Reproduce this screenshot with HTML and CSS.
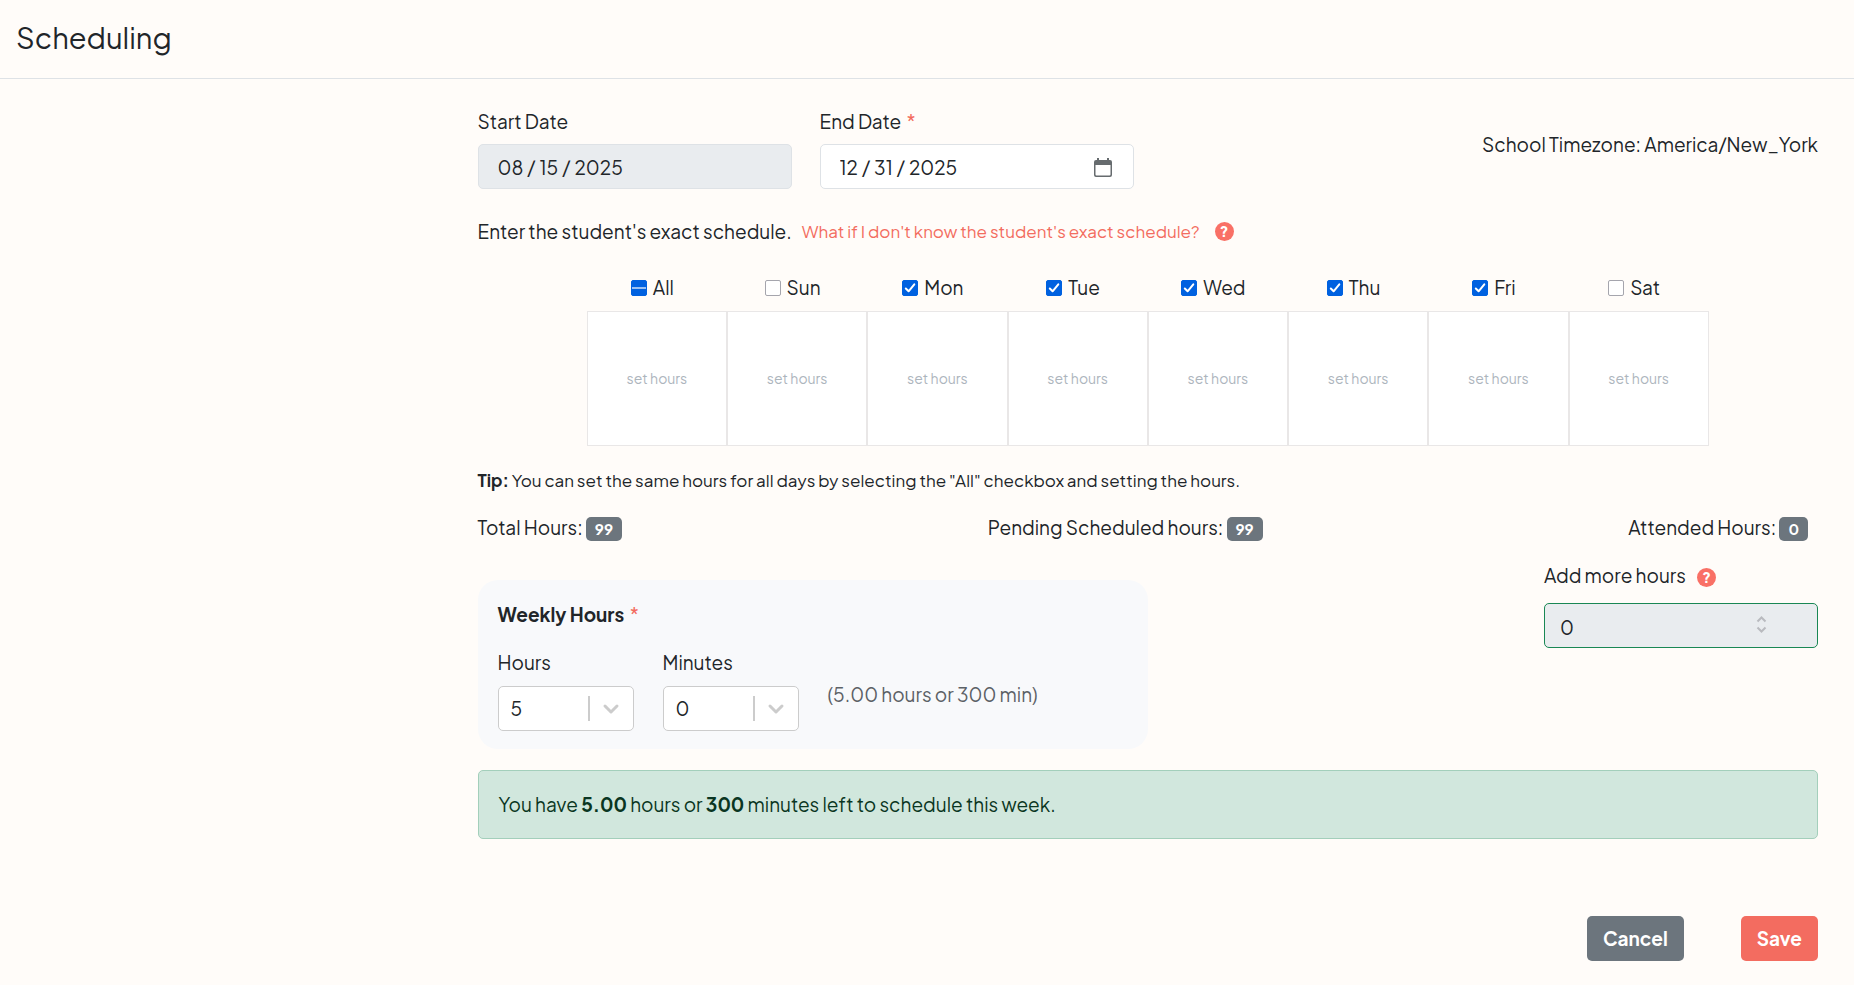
FILE: index.html
```html
<!DOCTYPE html>
<html lang="en">
<head>
  <meta charset="UTF-8">
  <meta name="viewport" content="width=device-width, initial-scale=1">
  <title>Scheduling</title>
  <link rel="stylesheet" href="styles.css">
</head>
<body>
  <header class="page-header">
    <h1>Scheduling</h1>
  </header>

  <form class="schedule-form">
    <div class="date-row">
      <div class="date-field">
        <label for="start-date">Start Date</label>
        <input type="date" id="start-date" class="form-control" value="2025-08-15" disabled>
      </div>
      <div class="date-field">
        <label for="end-date">End Date <span class="required">*</span></label>
        <input type="date" id="end-date" class="form-control" value="2025-12-31" required>
      </div>
      <p class="timezone">School Timezone: America/New_York</p>
    </div>

    <div class="intro">
      <span>Enter the student's exact schedule.</span>
      <a href="#help">What if I don't know the student's exact schedule?</a>
      <button type="button" class="help">?</button>
    </div>

    <table class="week">
      <thead>
        <tr>
          <th><label><input type="checkbox" id="all-days"> All</label></th>
          <th><label><input type="checkbox"> Sun</label></th>
          <th><label><input type="checkbox" checked> Mon</label></th>
          <th><label><input type="checkbox" checked> Tue</label></th>
          <th><label><input type="checkbox" checked> Wed</label></th>
          <th><label><input type="checkbox" checked> Thu</label></th>
          <th><label><input type="checkbox" checked> Fri</label></th>
          <th><label><input type="checkbox"> Sat</label></th>
        </tr>
      </thead>
      <tbody>
        <tr>
          <td><button type="button">set hours</button></td>
          <td><button type="button">set hours</button></td>
          <td><button type="button">set hours</button></td>
          <td><button type="button">set hours</button></td>
          <td><button type="button">set hours</button></td>
          <td><button type="button">set hours</button></td>
          <td><button type="button">set hours</button></td>
          <td><button type="button">set hours</button></td>
        </tr>
      </tbody>
    </table>

    <p class="tip"><strong>Tip:</strong> You can set the same hours for all days by selecting the "All" checkbox and setting the hours.</p>

    <div class="totals">
      <span>Total Hours: <span class="badge">99</span></span>
      <span>Pending Scheduled hours: <span class="badge">99</span></span>
      <span>Attended Hours: <span class="badge">0</span></span>
    </div>

    <div class="hours-row">
      <fieldset class="weekly">
        <legend>Weekly Hours <span class="required">*</span></legend>
        <div class="weekly-fields">
          <div class="select-field">
            <label for="hours">Hours</label>
            <select id="hours">
              <option>5</option>
            </select>
          </div>
          <div class="select-field">
            <label for="minutes">Minutes</label>
            <select id="minutes">
              <option>0</option>
            </select>
          </div>
          <span class="summary">(5.00 hours or 300 min)</span>
        </div>
      </fieldset>

      <div class="more-hours">
        <div class="more-label">
          <label for="more-hours">Add more hours</label>
          <button type="button" class="help">?</button>
        </div>
        <input type="number" id="more-hours" class="form-control is-valid" value="0" disabled>
      </div>
    </div>

    <div class="alert">You have <strong>5.00</strong> hours or <strong>300</strong> minutes left to schedule this week.</div>

    <div class="actions">
      <button type="button" class="btn btn-secondary">Cancel</button>
      <button type="submit" class="btn btn-primary">Save</button>
    </div>
  </form>

  <script src="script.js"></script>
</body>
</html>
```
FILE: styles.css
```css
* {
  box-sizing: border-box;
}
body {
  margin: 0;
  background-color: #fffcf9;
  color: #212529;
  font-family: 'Plus Jakarta Sans', Inter, sans-serif;
  font-size: 19px;
  line-height: 29px;
}
button, input, select {
  font: inherit;
  color: inherit;
}
h1, p {
  margin: 0;
}
.page-header {
  padding: 19px 16px 23px;
  border-bottom: 1px solid #dee2e6;
}
h1 {
  font-size: 29px;
  font-weight: 400;
  line-height: 36px;
}
.schedule-form {
  margin-left: 25%;
  padding: 28px 36px 24px 14px;
}
label {
  display: block;
}
.required {
  margin-left: 2px;
  color: #f36c60;
}

/* dates */
.date-row {
  display: flex;
  gap: 28px;
}
.date-field {
  width: 314px;
}
.date-field label {
  margin-bottom: 8px;
}
.form-control {
  display: block;
  width: 100%;
  height: 45px;
  padding: 2px 20px 0 19px;
  border: 1px solid #dee2e6;
  border-radius: 5px;
  background-color: #fff;
}
.form-control:disabled {
  background-color: #e9ecef;
  color: #212529;
  opacity: 1;
}
::-webkit-datetime-edit-text {
  padding: 0 4px;
}
::-webkit-datetime-edit-month-field,
::-webkit-datetime-edit-day-field,
::-webkit-datetime-edit-year-field {
  padding: 0;
}
::-webkit-calendar-picker-indicator {
  width: 20px;
  height: 24px;
  padding: 0;
  background: url("data:image/svg+xml,%3Csvg xmlns='http://www.w3.org/2000/svg' width='20' height='20'%3E%3Cpath d='M3 2h1V0h2v2h8V0h2v2h1q2 0 2 2v13q0 2-2 2H3q-2 0-2-2V4q0-2 2-2zm-.5 5v9.5q0 1 1 1h13q1 0 1-1V7z' fill='%23666b6e' fill-rule='evenodd'/%3E%3C/svg%3E") center / 20px 20px no-repeat;
}
input:disabled::-webkit-calendar-picker-indicator {
  display: none;
}
.timezone {
  margin-left: auto;
  padding-top: 23px;
}

/* schedule */
.intro {
  display: flex;
  align-items: center;
  gap: 10px;
  margin-top: 28px;
}
.intro a {
  color: #f36c60;
  font-size: 17px;
  text-decoration: none;
}
.help {
  width: 19px;
  height: 19px;
  margin-left: 5px;
  padding: 0;
  border: none;
  border-radius: 50%;
  background-color: #f97066;
  color: #fff;
  font-size: 14px;
  font-weight: 800;
  line-height: 19px;
}
.week {
  width: 1122px;
  max-width: 100%;
  margin: 27px auto 0;
  border-spacing: 0;
  table-layout: fixed;
}
.week th {
  padding: 0 9px 9px 0;
  font-weight: 400;
}
.week label {
  display: flex;
  align-items: center;
  justify-content: center;
  gap: 6px;
}
.week td {
  padding: 0;
}
.week button {
  display: block;
  width: 100%;
  height: 135px;
  border: 1px solid #e9e7e7;
  background-color: #fff;
  color: #adb5bd;
  font-size: 14px;
}
input[type="checkbox"] {
  appearance: none;
  width: 16px;
  height: 16px;
  margin: 0;
  border: 1px solid #a5a5ad;
  border-radius: 2px;
  background: #fff center / 16px no-repeat;
}
input[type="checkbox"]:checked,
input[type="checkbox"]:indeterminate {
  border-color: #0061e0;
  background-color: #0061e0;
}
input[type="checkbox"]:checked {
  background-image: url("data:image/svg+xml,%3Csvg xmlns='http://www.w3.org/2000/svg' viewBox='0 0 16 16'%3E%3Cpath d='M3.8 8.5l2.8 2.8 5.7-7' fill='none' stroke='%23fff' stroke-width='2' stroke-linecap='round' stroke-linejoin='round'/%3E%3C/svg%3E");
}
input[type="checkbox"]:indeterminate {
  background-image: url("data:image/svg+xml,%3Csvg xmlns='http://www.w3.org/2000/svg' viewBox='0 0 16 16'%3E%3Cpath d='M1 7h14v2H1z' fill='%2399c0f3'/%3E%3C/svg%3E");
}
.tip {
  margin-top: 20px;
  font-size: 17px;
}

/* totals */
.totals {
  display: flex;
  justify-content: space-between;
  margin-top: 18px;
  padding-right: 10px;
}
.badge {
  display: inline-block;
  padding: 0 9px;
  border-radius: 5px;
  background-color: #6c757d;
  color: #fff;
  font-size: 15px;
  font-weight: 700;
  line-height: 24px;
}

/* weekly hours */
.hours-row {
  display: flex;
  align-items: flex-start;
  justify-content: space-between;
  margin-top: 19px;
}
.weekly {
  width: 50%;
  margin: 19px 0 0;
  padding: 20px 20px 18px;
  border: none;
  border-radius: 20px;
  background-color: #f8f9fb;
}
.weekly legend {
  float: left;
  width: 100%;
  padding: 0;
  font-weight: 700;
}
.weekly legend .required {
  font-weight: 400;
}
.weekly-fields {
  display: flex;
  align-items: flex-end;
  gap: 29px;
  clear: both;
  padding-top: 19px;
}
.select-field {
  width: 136px;
}
.select-field label {
  margin-bottom: 9px;
}
select {
  display: block;
  appearance: none;
  width: 100%;
  height: 45px;
  padding: 0 50px 0 12px;
  border: 1px solid #ccc;
  border-radius: 5px;
  background: #fff url("data:image/svg+xml,%3Csvg xmlns='http://www.w3.org/2000/svg' width='45' height='25'%3E%3Cpath d='M0 0h2v25H0z' fill='%23ccc'/%3E%3Cpath d='M17 10l6 6 6-6' fill='none' stroke='%23ccc' stroke-width='3' stroke-linecap='round' stroke-linejoin='round'/%3E%3C/svg%3E") right center no-repeat;
}
.summary {
  padding-bottom: 22px;
  color: #5c6166;
}
.more-hours {
  width: 274px;
}
.more-label {
  display: flex;
  align-items: flex-end;
  gap: 6px;
  margin-bottom: 13px;
}
.more-label .help {
  margin-bottom: 3px;
}
.is-valid {
  padding: 2px 50px 0 15px;
  border-color: #198754;
}
::-webkit-inner-spin-button {
  appearance: none;
  width: 11px;
  height: 24px;
  opacity: 1;
  background: url("data:image/svg+xml,%3Csvg xmlns='http://www.w3.org/2000/svg' width='11' height='18'%3E%3Cpath d='M1.500 6.500l4-4 4 4M1.500 12.500l4 4 4-4' fill='none' stroke='%23b9babf' stroke-width='2'/%3E%3C/svg%3E") center top no-repeat;
}

.alert {
  margin-top: 21px;
  padding: 19px 20px;
  border: 1px solid #a3cfbb;
  border-radius: 5px;
  background-color: #d1e7dd;
  color: #0a3622;
}
.actions {
  display: flex;
  justify-content: flex-end;
  gap: 57px;
  margin-top: 77px;
}
.btn {
  height: 45px;
  padding: 0 16px;
  border: none;
  border-radius: 5px;
  color: #fff;
  font-weight: 700;
}
.btn-secondary {
  background-color: #6c757d;
}
.btn-primary {
  background-color: #f36c60;
}
```
FILE: script.js
```js
// some days are selected, but not every one
document.getElementById('all-days').indeterminate = true;
```
